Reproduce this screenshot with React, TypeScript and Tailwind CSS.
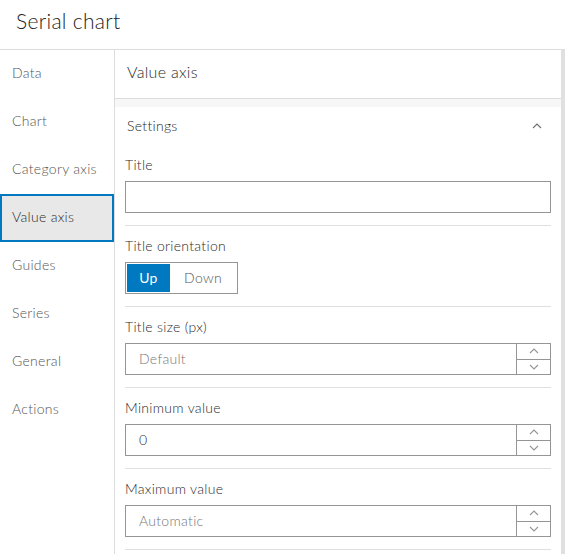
import React from "react";

const Chevron = ({ up, className }: { up: boolean; className?: string }) => (
  <svg width="10" height="6" viewBox="0 0 10 6" className={className}>
    <polyline
      points={up ? "1,5 5,1 9,5" : "1,1 5,5 9,1"}
      fill="none"
      stroke="currentColor"
      strokeWidth="1.1"
    />
  </svg>
);

const NumberInput = ({ value, placeholder }: { value?: string; placeholder?: string }) => (
  <div className="flex h-[32px] border border-[#959595] bg-white">
    <div
      className={
        "flex-1 flex items-center pl-[13px] pb-[2px] text-[14px] " +
        (value ? "text-[#2b2b2b]" : "text-[#767676]")
      }
    >
      {value ?? placeholder}
    </div>
    <div className="w-[34px] border-l border-[#959595] flex flex-col">
      <div className="flex-1 flex items-center justify-center border-b border-[#959595] text-[#959595]">
        <Chevron up />
      </div>
      <div className="flex-1 flex items-center justify-center text-[#959595]">
        <Chevron up={false} />
      </div>
    </div>
  </div>
);

const Field = ({ label, first, children }: { label: string; first?: boolean; children: React.ReactNode }) => (
  <div className={"pt-[10px] pb-[12px] " + (first ? "" : "border-t border-[#dfdfdf]")}>
    <div className="leading-[20px] text-[14px] text-[#2b2b2b] mb-[6px]">{label}</div>
    {children}
  </div>
);

export default function App() {
  const items = ["Data", "Chart", "Category axis", "Value axis", "Guides", "Series", "General", "Actions"];
  return (
    <div className="w-[565px] h-[554px] overflow-hidden bg-white font-['Lato',sans-serif] font-light tracking-[0.3px]">
      <div className="h-[50px] border-b border-[#dddddd] flex items-center pl-[16px] pb-[8px] text-[21px] text-[#222222]">
        Serial chart
      </div>
      <div className="flex h-[504px]">
        <div className="w-[115px] border-r border-[#dddddd] shrink-0">
          {items.map((it) =>
            it === "Value axis" ? (
              <div
                key={it}
                className="h-[48px] w-[114px] flex items-center pl-[10px] pb-[3px] bg-[#e8e8e8] border-2 border-[#0079c1] text-[14px] text-[#2b2b2b]"
              >
                {it}
              </div>
            ) : (
              <div key={it} className="h-[48px] flex items-center pl-[12px] pb-[4px] text-[14px] text-[#555555]">
                {it}
              </div>
            )
          )}
        </div>
        <div className="flex-1 flex">
          <div className="flex-1 flex flex-col">
            <div className="h-[49px] border-b border-[#dddddd] flex items-center pl-[12px] pb-[4px] text-[16px] text-[#2b2b2b]">
              Value axis
            </div>
            <div className="h-[8px] bg-[#f7f7f7]" />
            <div className="h-[38px] flex items-center justify-between pl-[12px] pr-[19px] text-[14px] text-[#1f1f1f]">
              <span className="-mt-[2px]">Settings</span>
              <Chevron up className="text-[#6e6e6e]" />
            </div>
            <div className="px-[10px]">
              <Field label="Title" first>
                <div className="h-[32px] border border-[#959595] bg-white" />
              </Field>
              <Field label="Title orientation">
                <div className="inline-flex h-[32px] w-[113px] border border-[#959595] p-[1px]">
                  <div className="w-[43px] bg-[#0079c1] text-white flex items-center justify-center pb-[2px] text-[14px] font-normal">
                    Up
                  </div>
                  <div className="flex-1 flex items-center justify-center pb-[2px] text-[14px] text-[#555555]">
                    Down
                  </div>
                </div>
              </Field>
              <Field label="Title size (px)">
                <NumberInput placeholder="Default" />
              </Field>
              <Field label="Minimum value">
                <NumberInput value="0" />
              </Field>
              <Field label="Maximum value">
                <NumberInput placeholder="Automatic" />
              </Field>
              <div className="border-t border-[#dfdfdf]" />
            </div>
          </div>
          <div className="w-[4px] bg-[#e0e0e0]" />
        </div>
      </div>
    </div>
  );
}
